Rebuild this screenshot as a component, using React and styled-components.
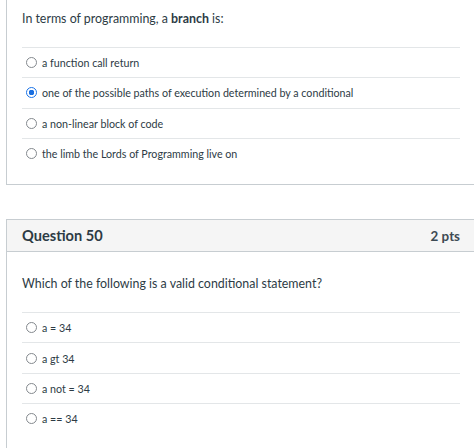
import React from 'react'
import styled, { createGlobalStyle } from 'styled-components'

const GlobalStyle = createGlobalStyle`
    html, body {
        margin: 0;
        padding: 0;
        background: #ffffff;
        overflow: hidden;
    }
    body {
        font-family: Lato, "Open Sans", "Liberation Sans", sans-serif;
        color: #2d3b45;
    }
`

const questions = [
    {
        id: 49,
        cutTop: true,
        text: <>In terms of programming, a <b>branch</b> is:</>,
        answers: [
            'a function call return',
            'one of the possible paths of execution determined by a conditional',
            'a non-linear block of code',
            'the limb the Lords of Programming live on',
        ],
        selected: 1,
    },
    {
        id: 50,
        points: '2 pts',
        text: 'Which of the following is a valid conditional statement?',
        answers: ['a = 34', 'a gt 34', 'a not = 34', 'a == 34'],
        selected: -1,
    },
]

const App = () => {
    return (
        <Page>
            <GlobalStyle />
            {questions.map(q => (
                <Card key={q.id} $cutTop={q.cutTop}>
                    {q.points && (
                        <Header>
                            <Title>Question {q.id}</Title>
                            <Points>{q.points}</Points>
                        </Header>
                    )}
                    <Body $cutTop={q.cutTop}>
                        <QuestionText>{q.text}</QuestionText>
                        <Answers>
                            {q.answers.map((a, i) => (
                                <Answer key={a}>
                                    <Radio $checked={i === q.selected} />
                                    <AnswerLabel>{a}</AnswerLabel>
                                </Answer>
                            ))}
                        </Answers>
                    </Body>
                </Card>
            ))}
        </Page>
    )
}

export default App

// the cards run on past the right edge of the window, as in the screenshot
const Page = styled.div`
    display: flex;
    flex-direction: column;
    gap: 34px;
    padding-left: 6px;
    width: 474px;
`

const Card = styled.div`
    border: 1px solid #c7cdd1;
    border-top: ${p => (p.$cutTop ? 'none' : '1px solid #c7cdd1')};
    background: #ffffff;
`

const Header = styled.div`
    display: flex;
    justify-content: space-between;
    align-items: center;
    height: 31px;
    padding: 0 19px 0 15px;
    background: #f5f5f5;
    border-bottom: 1px solid #c7cdd1;
`

const Title = styled.div`
    font-size: 14.6px;
    font-weight: 700;
    color: #2d3b45;
`

const Points = styled.div`
    font-size: 13.4px;
    font-weight: 700;
    color: #3d4a53;
`

const Body = styled.div`
    padding: ${p => (p.$cutTop ? '11px' : '24px')} 19px 16px 15px;
`

const QuestionText = styled.div`
    font-size: 12.4px;
    line-height: 16px;
    margin-bottom: 20px;
`

const Answers = styled.div`
    display: flex;
    flex-direction: column;
`

const Answer = styled.div`
    display: flex;
    align-items: center;
    height: 29.3px;
    border-top: 1px solid #e3e6e8;
    padding-left: 4px;
`

const Radio = styled.span`
    box-sizing: border-box;
    width: 11px;
    height: 11px;
    border-radius: 50%;
    border: 1px solid ${p => (p.$checked ? '#1a73e8' : '#84898e')};
    background: ${p => (p.$checked ? 'radial-gradient(circle, #1a6fe0 0 2.6px, #ffffff 3px)' : '#ffffff')};
    margin-right: 5px;
    flex-shrink: 0;
`

const AnswerLabel = styled.span`
    font-size: 10.7px;
    color: #2d3b45;
`
